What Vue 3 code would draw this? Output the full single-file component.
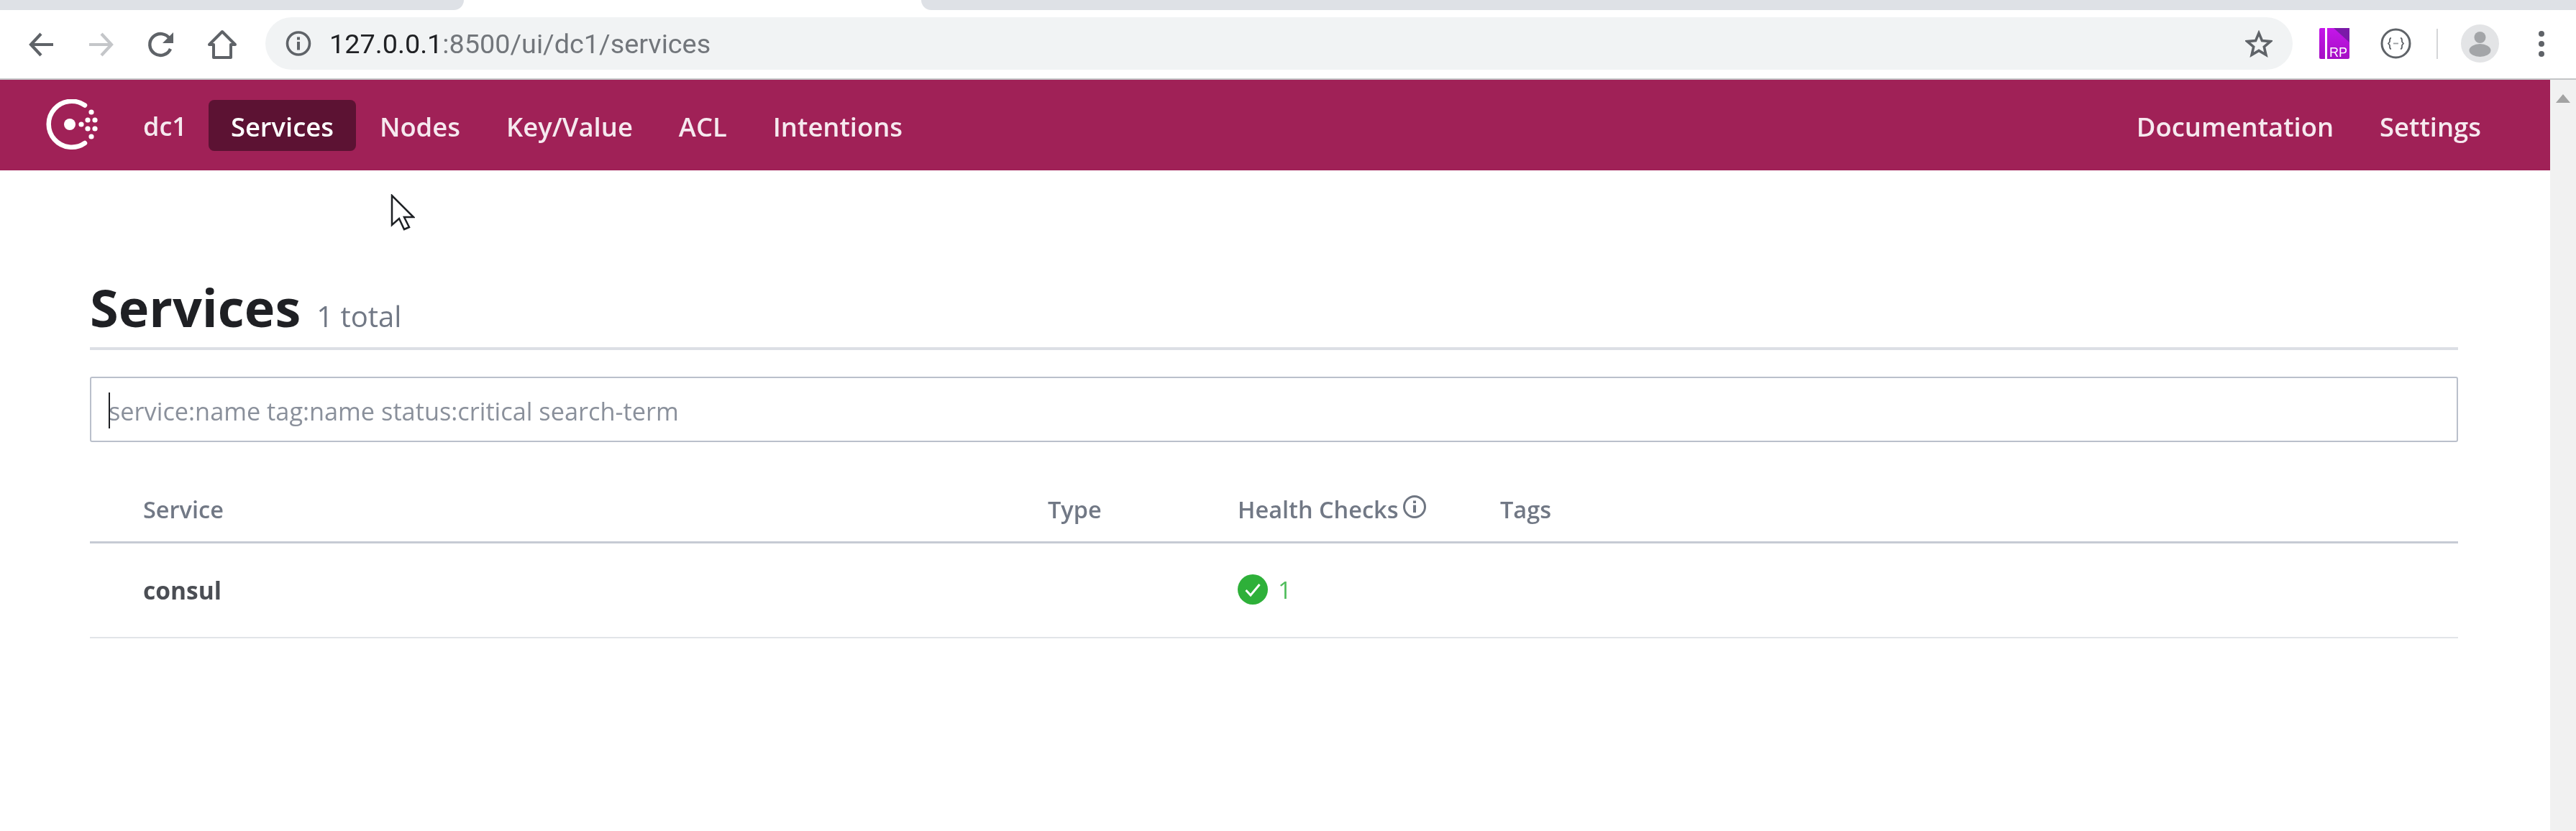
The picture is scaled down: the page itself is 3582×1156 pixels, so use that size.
<script setup>
const navLeft = [
  { label: 'Services', active: true },
  { label: 'Nodes' },
  { label: 'Key/Value' },
  { label: 'ACL' },
  { label: 'Intentions' }
]
const navRight = ['Documentation', 'Settings']
const dots = [
  [33, 35, 8], [49, 35, 3.6], [63, 18, 3.6], [58, 29, 3.6], [68, 29, 3.6], [58, 41, 3.6], [68, 41, 3.6], [63, 52, 3.6]
]
</script>

<template>
  <div class="window">
    <div class="tabstrip">
      <div class="tab-left"></div>
      <div class="tab-active"></div>
      <div class="tab-right"></div>
    </div>
    <div class="toolbar">
      <div class="nav-btns">
        <svg class="tb-ic" viewBox="0 0 36 36"><path d="M34 18H4M17 3 3 18l14 15" fill="none" stroke="#5f6368" stroke-width="4.2"/></svg>
        <svg class="tb-ic fwd" viewBox="0 0 36 36"><path d="M2 18h30M19 3l14 15-14 15" fill="none" stroke="#c4c6c9" stroke-width="4.2"/></svg>
        <svg class="tb-ic rl" viewBox="0 0 38 38"><path d="M32 25a15 15 0 1 1-1-14" fill="none" stroke="#5f6368" stroke-width="4.4"/><path d="M36 2v15H21z" fill="#5f6368"/></svg>
        <svg class="tb-ic hm" viewBox="0 0 42 42"><path d="M21 3 3 21h6v18h24V21h6z" fill="none" stroke="#5f6368" stroke-width="4" stroke-linejoin="round"/></svg>
      </div>
      <div class="omnibox">
        <svg class="omni-info" viewBox="0 0 36 36"><circle cx="18" cy="18" r="15.5" fill="none" stroke="#5f6368" stroke-width="3.6"/><path d="M16 15.5h4V27h-4zM16 9h4v4h-4z" fill="#5f6368"/></svg>
        <span class="url"><span class="url-host">127.0.0.1</span>:8500/ui/dc1/services</span>
        <svg class="star" viewBox="0 0 38 38"><path d="M19 4l4.500 10.600 11.500 1-8.700 7.500 2.600 11.200L19 28.400l-9.900 5.900 2.600-11.200L3 15.600l11.500-1z" fill="none" stroke="#5f6368" stroke-width="3.6"/></svg>
      </div>
      <div class="extensions">
        <svg class="rp" viewBox="0 0 42 43">
          <defs>
            <linearGradient id="rpg" x1="0" y1="0" x2="0" y2="1">
              <stop offset="0" stop-color="#c516ea" />
              <stop offset="1" stop-color="#a50fc4" />
            </linearGradient>
          </defs>
          <rect width="42" height="43" rx="2" fill="url(#rpg)"/>
          <path d="M20 0h22v20z" fill="#7a1aa8"/>
          <rect x="8" width="3" height="43" fill="#fff"/>
          <text x="14" y="40" class="rp-text">RP</text>
        </svg>
        <svg class="ext2" viewBox="0 0 43 43"><circle cx="21.500" cy="21.500" r="19.500" fill="none" stroke="#5f6368" stroke-width="3"/><path d="M15 14q-2 0-2 3v2l-2 2.500 2 2.500v2q0 3 2 3M28 14q2 0 2 3v2l2 2.500-2 2.500v2q0 3-2 3" fill="none" stroke="#5f6368" stroke-width="1.800"/><path d="M18 21.500h7" stroke="#9a9da1" stroke-width="1.800"/></svg>
        <div class="sep"></div>
        <svg class="avatar" viewBox="0 0 53 53"><circle cx="26.500" cy="26.500" r="26.500" fill="#e3e4e6"/><circle cx="26.500" cy="18" r="8" fill="#a3a5a8"/><ellipse cx="26.500" cy="36" rx="15" ry="9" fill="#a3a5a8"/></svg>
        <div class="menu"><i></i><i></i><i></i></div>
      </div>
    </div>
    <div class="below">
      <div class="page">
        <header class="topnav">
          <svg class="logo" viewBox="0 0 74 72">
            <path d="M54 8.500A32 32 0 1 0 54 61" fill="none" stroke="#fff" stroke-width="6.500" stroke-linecap="round"/>
            <circle v-for="(d, i) in dots" :key="i" :cx="d[0]" :cy="d[1]" :r="d[2]" fill="#fff" />
          </svg>
          <span class="dc">dc1</span>
          <nav class="nav-group">
            <a v-for="n in navLeft" :key="n.label" class="nav-item" :class="{ active: n.active }">{{ n.label }}</a>
          </nav>
          <nav class="nav-group right">
            <a v-for="n in navRight" :key="n" class="nav-item">{{ n }}</a>
          </nav>
        </header>
        <main class="content">
          <div class="title-row">
            <h1 class="title">Services</h1>
            <span class="total">1 total</span>
          </div>
          <div class="search">
            <span class="caret"></span>
            <span class="placeholder">service:name tag:name status:critical search-term</span>
          </div>
          <div class="row head">
            <span>Service</span>
            <span>Type</span>
            <span class="hc">Health Checks
              <svg class="hc-info" viewBox="0 0 34 34"><circle cx="17" cy="17" r="14.500" fill="none" stroke="#6f7682" stroke-width="3"/><path d="M15 14.500h4V25h-4zM15 8.500h4v3.600h-4z" fill="#6f7682"/></svg>
            </span>
            <span>Tags</span>
          </div>
          <div class="row body">
            <span class="svc">consul</span>
            <span></span>
            <span class="passing">
              <svg class="check" viewBox="0 0 42 42"><circle cx="21" cy="21" r="21" fill="#2eb039"/><path d="M11.500 22l6.500 7 12.500-15" fill="none" stroke="#fff" stroke-width="3"/></svg>
              <span>1</span>
            </span>
            <span></span>
          </div>
        </main>
        <svg class="cursor" viewBox="0 0 34 52"><path d="M2 2v41l10-9 7 15 7-3-7-14h13z" fill="#fff" stroke="#1d2024" stroke-width="2.500"/></svg>
      </div>
      <aside class="scrollbar"><span class="up"></span></aside>
    </div>
  </div>
</template>

<style>
html, body { margin: 0; height: 100%; overflow: hidden; background: #fff; }
</style>

<style scoped>
.window {
  width: 3582px;
  height: 1156px;
  display: flex;
  flex-direction: column;
  font-family: "Open Sans", "Noto Sans", sans-serif;
  overflow: hidden;
  filter: blur(0.7px);
}
.tabstrip { height: 14px; display: flex; background: #fff; flex: none; }
.tab-left { width: 645px; background: #dee1e6; border-bottom-right-radius: 14px; }
.tab-active { width: 636px; background: #fff; }
.tab-right { flex: 1; background: #dee1e6; border-bottom-left-radius: 14px; }

.toolbar {
  flex: none;
  display: flex;
  align-items: center;
  background: #fff;
  border-bottom: 2px solid #c4c5c7;
  box-sizing: border-box;
  height: 97px;
}
.nav-btns { display: flex; align-items: center; width: 369px; padding-left: 40px; box-sizing: border-box; }
.tb-ic { width: 36px; height: 36px; flex: none; }
.fwd { margin-left: 46px; }
.rl { margin-left: 47px; width: 38px; height: 38px; }
.hm { margin-left: 45px; width: 42px; height: 42px; }

.omnibox {
  width: 2819px;
  height: 73px;
  margin-top: -2px;
  flex: none;
  background: #f1f3f4;
  border-radius: 37px;
  display: flex;
  align-items: center;
  padding-left: 28px;
  padding-right: 28px;
  box-sizing: border-box;
}
.omni-info { width: 36px; height: 37px; flex: none; }
.url {
  margin-left: 25px;
  font-family: "Roboto", sans-serif;
  font-size: 37.8px;
  color: #72767b;
  flex: 1;
  white-space: nowrap;
}
.url-host { color: #202124; }
.star { width: 38px; height: 38px; flex: none; }

.extensions { display: flex; align-items: center; margin-top: -2px; padding-left: 37px; }
.rp { width: 42px; height: 43px; flex: none; }
.rp-text { font: 400 18px "Liberation Sans", sans-serif; fill: #fff; }
.ext2 { width: 43px; height: 43px; flex: none; margin-left: 43px; }
.sep { width: 2px; height: 42px; background: #d4d5d7; margin-left: 35px; flex: none; }
.avatar { width: 53px; height: 53px; flex: none; margin-left: 32px; }
.menu { display: flex; flex-direction: column; gap: 6px; margin-left: 55px; }
.menu i { width: 8px; height: 8px; border-radius: 50%; background: #5f6368; display: block; }

.below { flex: 1; display: flex; min-height: 0; }
.page { flex: 1; position: relative; min-width: 0; background: #fff; }
.scrollbar { width: 36px; background: #f1f1f1; flex: none; display: flex; justify-content: center; padding-top: 20px; box-sizing: border-box; }
.up { width: 0; height: 0; border-left: 10px solid transparent; border-right: 10px solid transparent; border-bottom: 12px solid #a3a3a3; }

.topnav {
  height: 126px;
  background: #a02157;
  display: flex;
  align-items: center;
  padding-left: 64px;
  padding-right: 65px;
  box-sizing: border-box;
  color: #fff;
}
.logo { width: 74px; height: 72px; flex: none; }
.dc { margin-left: 61px; margin-top: 3px; font-size: 36px; font-weight: 600; color: #f6e9ef; }
.nav-group { display: flex; align-items: center; margin-left: 30px; }
.nav-group.right { margin-left: auto; }
.nav-item {
  height: 71px;
  line-height: 74px;
  padding: 0 31px;
  border-radius: 8px;
  font-size: 36.4px;
  font-weight: 600;
  color: #f6e9ef;
  white-space: nowrap;
}
.nav-item + .nav-item { margin-left: 2px; }
.nav-item.active { background: #5c1233; color: #fff; }

.content { padding: 0 128px 0 125px; }
.title-row {
  display: flex;
  align-items: baseline;
  gap: 22px;
  height: 106px;
  padding-top: 140px;
  border-bottom: 4px solid #dcdfe5;
}
.title { margin: 0; font-size: 72px; font-weight: 700; color: #1f2024; line-height: 100px; }
.total { font-size: 40px; color: #717885; }
.search {
  position: relative;
  margin-top: 37px;
  height: 91px;
  box-sizing: border-box;
  border: 2px solid #bac0cb;
  border-radius: 3px;
  display: flex;
  align-items: center;
  padding-left: 24px;
}
.placeholder { font-size: 34.3px; color: #8a909b; white-space: nowrap; margin-top: 3px; }
.caret { position: absolute; left: 24px; top: 20px; width: 2px; height: 50px; background: #1f2024; }

.row {
  display: grid;
  grid-template-columns: 1258px 264px 365px 1fr;
  padding-left: 74px;
  box-sizing: border-box;
  align-items: center;
}
.head {
  margin-top: 43px;
  height: 98px;
  padding-top: 5px;
  border-bottom: 3px solid #c6cbd4;
  font-size: 32.5px;
  font-weight: 600;
  color: #717885;
}
.hc { display: flex; align-items: center; gap: 5px; white-space: nowrap; }
.hc-info { width: 34px; height: 34px; margin-top: -6px; }
.body { height: 132px; border-bottom: 2px solid #e2e4e8; font-size: 33.5px; }
.svc { font-weight: 700; color: #4b4e54; }
.passing { display: flex; align-items: center; gap: 14px; color: #4fbd5b; margin-top: -3px; }
.check { width: 42px; height: 42px; }
.cursor { position: absolute; left: 543px; top: 159px; width: 34px; height: 52px; }
</style>
